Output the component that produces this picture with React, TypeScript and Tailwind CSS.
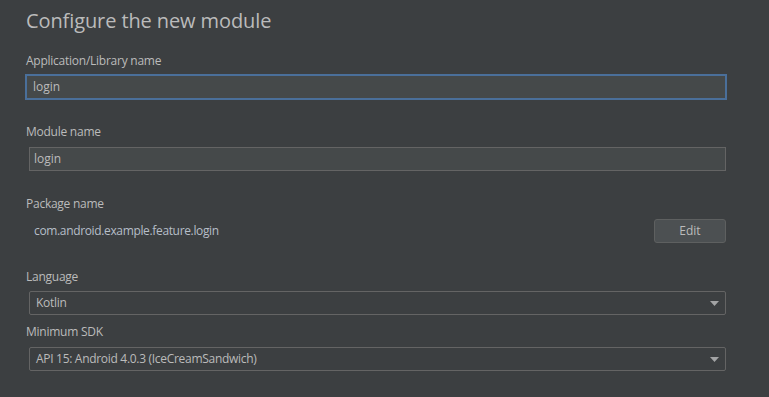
import React from "react";

const font = { fontFamily: '"Open Sans", "Noto Sans", sans-serif' };

function Label({ text, className = "" }: { text: string; className?: string }) {
  return (
    <div
      className={`h-[16px] pt-[1px] text-[12px] leading-[16px] tracking-[-0.25px] text-[#bbbbbb] ${className}`}
    >
      {text}
    </div>
  );
}

function Caret() {
  return (
    <svg width="9" height="5" viewBox="0 0 9 5" className="shrink-0">
      <path d="M0 0H9L4.5 5Z" fill="#a3a4a5" />
    </svg>
  );
}

function Select({ value, className = "" }: { value: string; className?: string }) {
  return (
    <div
      className={`ml-[3px] h-[24px] flex items-center justify-between pl-[6px] pr-[6px] rounded-[2px] border border-[#646464] bg-[#3c3f41] text-[12px] tracking-[-0.3px] text-[#bbbbbb] ${className}`}
    >
      <span>{value}</span>
      <Caret />
    </div>
  );
}

export default function App() {
  return (
    <div
      className="w-[769px] h-[397px] bg-[#3c3f41] pl-[26px] pr-[43px] overflow-hidden flex flex-col"
      style={font}
    >
      <div className="pt-[7px] h-[35px] text-[20px] leading-[28px] tracking-[-0.1px] text-[#bbbbbb]">
        Configure the new module
      </div>

      <Label text="Application/Library name" className="mt-[17px]" />
      <div className="mt-[6px] -ml-[1px] -mr-[1px] h-[26px] flex items-center pl-[6px] border-2 border-[#4a6f9a] bg-[#45494a] text-[12px] text-[#bbbbbb]">
        login
      </div>

      <Label text="Module name" className="mt-[23px]" />
      <div className="mt-[8px] ml-[3px] h-[24px] flex items-center pl-[4px] border border-[#646464] bg-[#45494a] text-[12px] text-[#bbbbbb]">
        login
      </div>

      <Label text="Package name" className="mt-[24px]" />
      <div className="mt-[8px] h-[24px] flex items-center justify-between">
        <span className="pl-[8px] text-[12px] leading-[16px] tracking-[-0.35px] text-[#b6bec8]">
          com.android.example.feature.login
        </span>
        <button className="w-[72px] h-[24px] rounded-[3px] border border-[#5e6060] bg-[#4c5052] text-[12px] text-[#bbbbbb]">
          Edit
        </button>
      </div>

      <Label text="Language" className="mt-[25px]" />
      <Select value="Kotlin" className="mt-[7px]" />

      <Label text="Minimum SDK" className="mt-[8px]" />
      <Select value="API 15: Android 4.0.3 (IceCreamSandwich)" className="mt-[8px]" />
    </div>
  );
}
